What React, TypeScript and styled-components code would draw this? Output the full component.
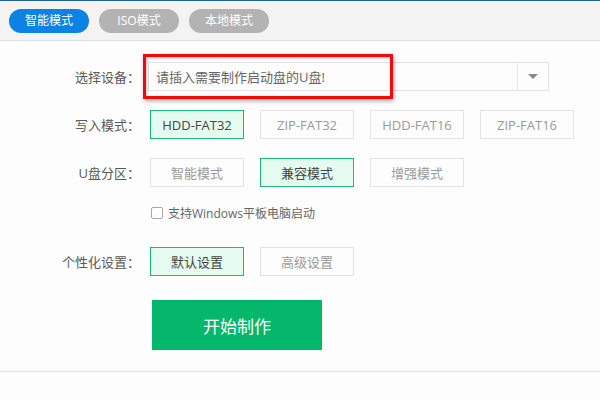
import React, { useState } from 'react'
import styled, { createGlobalStyle } from 'styled-components'

const Global = createGlobalStyle`
  html, body { margin: 0; padding: 0; background: #fdfdfd; }
  body {
    font-family: "Open Sans", "Noto Sans CJK SC", "Liberation Sans", sans-serif;
    width: 600px;
    height: 400px;
    overflow: hidden;
  }
`

const Page = styled.div`
  width: 600px;
  height: 400px;
  background: #fdfdfd;
  display: flex;
  flex-direction: column;
`

const TabBar = styled.div`
  height: 41px;
  background: #f3f3f3;
  border-top: 1px solid #1d5ea6;
  border-bottom: 1px solid #dedede;
  display: flex;
  align-items: flex-start;
  gap: 10px;
  padding: 8px 0 0 9px;
  box-sizing: border-box;
`

const Tab = styled.div<{ $active?: boolean }>`
  width: 80px;
  height: 24px;
  border-radius: 12px;
  background: ${p => (p.$active ? '#0b83e4' : '#b3b3b3')};
  color: #fff;
  font-size: 12px;
  line-height: 24px;
  text-align: center;
`

const Body = styled.div`
  padding-top: 21px;
  display: flex;
  flex-direction: column;
`

const Row = styled.div<{ $mt?: number }>`
  display: flex;
  align-items: center;
  margin-top: ${p => p.$mt ?? 0}px;
  height: 29px;
`

const Label = styled.div`
  width: 140px;
  text-align: right;
  font-size: 13px;
  color: #5a5a5a;
  flex-shrink: 0;
`

const Options = styled.div`
  display: flex;
  gap: 16px;
  margin-left: 10px;
`

const Option = styled.div<{ $on?: boolean }>`
  width: 94px;
  height: 29px;
  box-sizing: border-box;
  border: 1px solid ${p => (p.$on ? '#1dbb72' : '#e3e3e3')};
  background: ${p => (p.$on ? '#e5fbf0' : '#fdfdfd')};
  color: ${p => (p.$on ? '#444' : '#9a9a9a')};
  font-size: 13px;
  display: flex;
  align-items: center;
  justify-content: center;
  cursor: pointer;
`

const SelectWrap = styled.div`
  position: relative;
  margin-left: 8px;
  width: 401px;
  height: 29px;
  box-sizing: border-box;
  border: 1px solid #e3e3e3;
  background: #fdfdfd;
  display: flex;
`

const SelectText = styled.div`
  flex: 1;
  font-size: 13px;
  color: #666;
  padding-left: 7px;
  display: flex;
  align-items: center;
`

const Arrow = styled.div`
  width: 30px;
  border-left: 1px solid #e3e3e3;
  display: flex;
  align-items: center;
  justify-content: center;
  &::after {
    content: '';
    border-left: 5px solid transparent;
    border-right: 5px solid transparent;
    border-top: 5px solid #888;
  }
`

const Highlight = styled.div`
  position: absolute;
  left: -6px;
  top: -9px;
  width: 250px;
  height: 45px;
  box-sizing: border-box;
  border: 3px solid #ee0b0b;
  box-shadow: 1px 2px 4px rgba(0, 0, 0, 0.35), inset 1px 1px 3px rgba(0, 0, 0, 0.25);
  pointer-events: none;
`

const CheckRow = styled.label`
  display: flex;
  align-items: center;
  margin: 18px 0 0 151px;
  font-size: 12px;
  color: #666;
  gap: 5px;
  height: 16px;
`

const Box = styled.span`
  width: 12px;
  height: 12px;
  box-sizing: border-box;
  border: 1px solid #a8a8a8;
  border-radius: 2px;
  background: #fff;
`

const StartButton = styled.button`
  margin: 24px 0 0 152px;
  width: 170px;
  height: 50px;
  border: none;
  background: #05b76b;
  color: #fff;
  font-family: inherit;
  font-size: 17px;
  cursor: pointer;
`

const Footer = styled.div`
  margin-top: 21px;
  border-top: 1px solid #e4e4e4;
`

export default function App() {
  const [fs, setFs] = useState('HDD-FAT32')
  const [part, setPart] = useState('兼容模式')
  const [custom, setCustom] = useState('默认设置')
  return (
    <Page>
      <Global />
      <TabBar>
        <Tab $active>智能模式</Tab>
        <Tab>ISO模式</Tab>
        <Tab>本地模式</Tab>
      </TabBar>
      <Body>
        <Row>
          <Label>选择设备：</Label>
          <SelectWrap>
            <SelectText>请插入需要制作启动盘的U盘!</SelectText>
            <Arrow />
            <Highlight />
          </SelectWrap>
        </Row>
        <Row $mt={19}>
          <Label>写入模式：</Label>
          <Options>
            {['HDD-FAT32', 'ZIP-FAT32', 'HDD-FAT16', 'ZIP-FAT16'].map(o => (
              <Option key={o} $on={fs === o} onClick={() => setFs(o)}>{o}</Option>
            ))}
          </Options>
        </Row>
        <Row $mt={19}>
          <Label>U盘分区：</Label>
          <Options>
            {['智能模式', '兼容模式', '增强模式'].map(o => (
              <Option key={o} $on={part === o} onClick={() => setPart(o)}>{o}</Option>
            ))}
          </Options>
        </Row>
        <CheckRow>
          <Box />
          支持Windows平板电脑启动
        </CheckRow>
        <Row $mt={26}>
          <Label>个性化设置：</Label>
          <Options>
            {['默认设置', '高级设置'].map(o => (
              <Option key={o} $on={custom === o} onClick={() => setCustom(o)}>{o}</Option>
            ))}
          </Options>
        </Row>
        <StartButton>开始制作</StartButton>
        <Footer />
      </Body>
    </Page>
  )
}
